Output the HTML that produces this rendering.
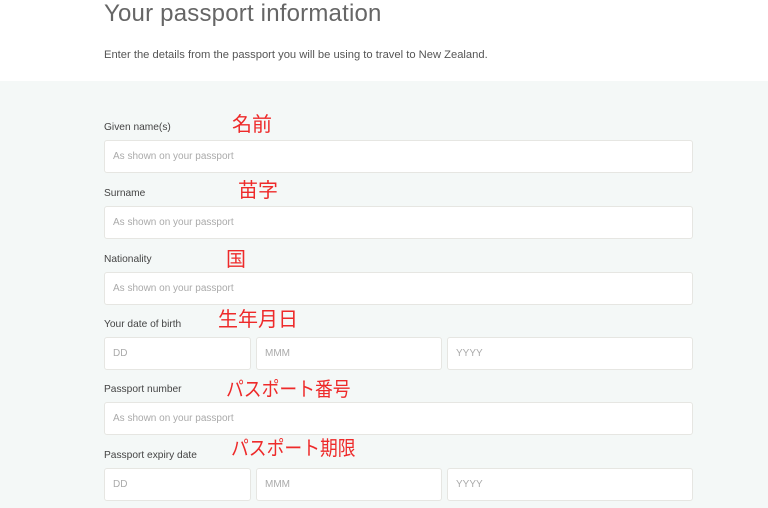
<!DOCTYPE html>
<html><head><meta charset="utf-8"><style>
*{margin:0;padding:0;box-sizing:border-box}
body{width:768px;height:508px;overflow:hidden;background:#f4f8f7;font-family:"Liberation Sans",sans-serif;position:relative}
.hdr{position:absolute;left:0;top:0;width:768px;height:81px;background:#fff}
h1{position:absolute;left:104px;top:0px;font-weight:300;font-size:24px;color:#666;letter-spacing:0.2px}
.sub{position:absolute;left:104px;top:49px;font-size:11.2px;color:#555}
.lb{position:absolute;left:104px;font-size:10.2px;color:#444}
.in{position:absolute;height:33px;background:#fff;border:1px solid #e6e6e2;border-radius:3px;font-size:10px;color:#aaa;padding-left:8px;line-height:31px}
.jp{position:absolute;color:#ee2a2a;font-size:20px;font-family:"Liberation Sans","Noto Sans CJK JP",sans-serif;line-height:1;transform-origin:left top}
.n{transform:scaleX(0.89)}
</style></head><body>
<div class="hdr"></div>
<h1>Your passport information</h1>
<div class="sub">Enter the details from the passport you will be using to travel to New Zealand.</div>

<div class="lb" style="top:122px">Given name(s)</div>
<div class="jp" style="left:232px;top:115px">名前</div>
<div class="in" style="left:104px;top:140px;width:589px">As shown on your passport</div>

<div class="lb" style="top:188px">Surname</div>
<div class="jp" style="left:238px;top:181px">苗字</div>
<div class="in" style="left:104px;top:206px;width:589px">As shown on your passport</div>

<div class="lb" style="top:254px">Nationality</div>
<div class="jp" style="left:226px;top:250px">国</div>
<div class="in" style="left:104px;top:272px;width:589px">As shown on your passport</div>

<div class="lb" style="top:319px">Your date of birth</div>
<div class="jp" style="left:218px;top:310px">生年月日</div>
<div class="in" style="left:104px;top:337px;width:147px">DD</div>
<div class="in" style="left:256px;top:337px;width:186px">MMM</div>
<div class="in" style="left:447px;top:337px;width:246px">YYYY</div>

<div class="lb" style="top:384px">Passport number</div>
<div class="jp n" style="left:226px;top:380px">パスポート番号</div>
<div class="in" style="left:104px;top:402px;width:589px">As shown on your passport</div>

<div class="lb" style="top:450px">Passport expiry date</div>
<div class="jp n" style="left:231px;top:439px">パスポート期限</div>
<div class="in" style="left:104px;top:468px;width:147px">DD</div>
<div class="in" style="left:256px;top:468px;width:186px">MMM</div>
<div class="in" style="left:447px;top:468px;width:246px">YYYY</div>
</body></html>
